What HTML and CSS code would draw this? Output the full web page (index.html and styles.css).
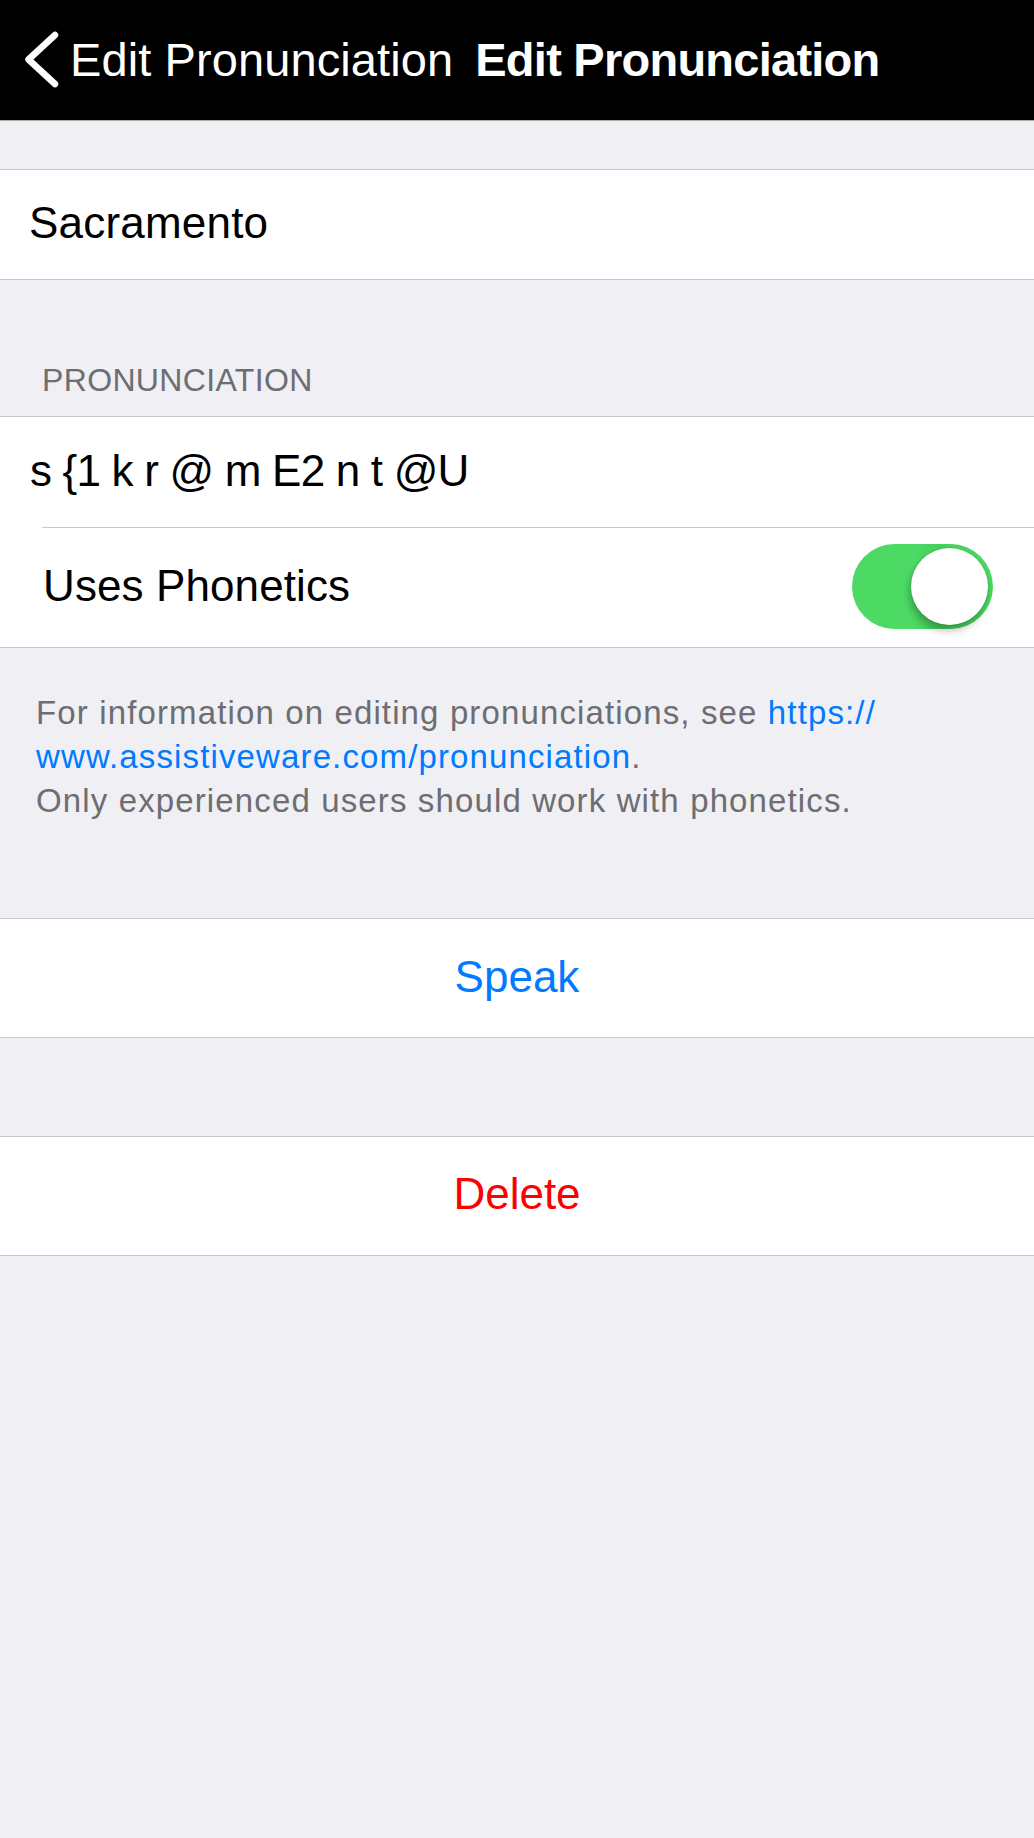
FILE: index.html
```html
<!DOCTYPE html>
<html lang="en">
<head>
<meta charset="utf-8">
<title>Edit Pronunciation</title>
<link rel="stylesheet" href="styles.css">
</head>
<body>
<header class="nav">
  <svg class="chevron" width="40" height="64" viewBox="0 0 40 64" aria-hidden="true">
    <path d="M35 7 L8.5 31.5 L35 56" fill="none" stroke="#ffffff" stroke-width="6.5" stroke-linecap="round" stroke-linejoin="round"/>
  </svg>
  <span class="back-label">Edit Pronunciation</span>
  <span class="nav-title">Edit Pronunciation</span>
</header>

<section class="group group-first">
  <div class="row field-row">Sacramento</div>
</section>

<div class="section-header">PRONUNCIATION</div>

<section class="group">
  <div class="row phon-row">s {1 k r @ m E2 n t @U</div>
  <div class="separator"></div>
  <div class="row toggle-row">
    <span class="toggle-label">Uses Phonetics</span>
    <span class="switch"><span class="knob"></span></span>
  </div>
</section>

<p class="footer">For information on editing pronunciations, see <span class="link">https://<br>www.assistiveware.com/pronunciation</span>.<br>Only experienced users should work with phonetics.</p>

<section class="group">
  <div class="row button-row speak">Speak</div>
</section>

<section class="group group-delete">
  <div class="row button-row delete">Delete</div>
</section>
</body>
</html>
```

FILE: styles.css
```css
html, body {
  margin: 0;
  padding: 0;
}
body {
  background: #efeff4;
  font-family: "Liberation Sans", Arial, sans-serif;
  color: #000;
  min-height: 1838px;
}

.nav {
  height: 118px;
  padding-bottom: 2px;
  background: #000;
  border-bottom: 1px solid #a9a9ab;
  display: flex;
  align-items: center;
  color: #fff;
  font-size: 47px;
  line-height: 47px;
  white-space: nowrap;
}
.chevron {
  display: block;
  margin-left: 20px;
  margin-top: 2px;
  flex: none;
}
.back-label {
  margin-left: 10px;
  letter-spacing: 0.1px;
}
.nav-title {
  margin-left: 22px;
  font-weight: bold;
  letter-spacing: -0.75px;
}

.group {
  background: #fff;
  border-top: 1px solid #c8c7cc;
  border-bottom: 1px solid #c8c7cc;
}
.group-first {
  margin-top: 48px;
}

.row {
  font-size: 44px;
  line-height: 44px;
  white-space: nowrap;
}
.field-row {
  padding: 31px 0 34px 29px;
  letter-spacing: 0.2px;
}
.phon-row {
  padding: 32px 0 34px 30px;
  letter-spacing: -0.8px;
}
.separator {
  height: 1px;
  margin-left: 42px;
  background: #c8c7cc;
}
.toggle-row {
  height: 119px;
  display: flex;
  align-items: center;
  justify-content: space-between;
  padding: 0 41px 0 43px;
}
.toggle-label {
  margin-bottom: 3px;
  letter-spacing: 0.1px;
}
.switch {
  width: 141px;
  height: 85px;
  border-radius: 43px;
  background: linear-gradient(90deg, #4cd964 0%, #4cd964 45%, #46cf5d 62%, #4cd964 100%);
  display: flex;
  align-items: center;
  justify-content: flex-end;
  padding: 0 5px;
  box-sizing: border-box;
  margin-top: -2px;
}
.knob {
  width: 77px;
  height: 77px;
  border-radius: 50%;
  background: #fff;
  box-shadow: 0 0 0 1px rgba(0, 0, 0, 0.06), -2px 5px 7px rgba(0, 0, 0, 0.2), 0 8px 10px rgba(0, 0, 0, 0.08);
}

.section-header {
  padding: 81px 42px 17px;
  font-size: 32px;
  line-height: 38px;
  letter-spacing: 0.35px;
  color: #6d6d72;
}

.footer {
  margin: 0;
  padding: 43px 36px 95px;
  font-size: 33px;
  line-height: 44px;
  letter-spacing: 1.13px;
  color: #6d6d72;
  white-space: nowrap;
}
.link {
  color: #007aff;
}

.button-row {
  text-align: center;
}
.speak {
  padding: 36px 0 38px;
  color: #007aff;
}
.group-delete {
  margin-top: 98px;
}
.delete {
  padding: 35px 0 39px;
  color: #fe0000;
}
```
